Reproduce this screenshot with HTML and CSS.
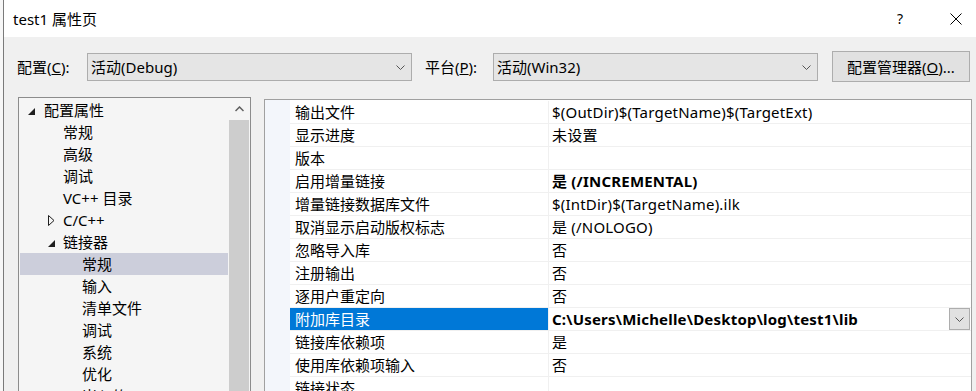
FILE: index.html
```html
<!DOCTYPE html>
<html lang="zh-CN">
<head>
  <meta charset="UTF-8" />
  <title>test1 属性页</title>
  <link rel="stylesheet" href="styles.css">
</head>
<body>
  <div class="dialog">
    <div class="titlebar">
      <span class="title">test1 属性页</span>
      <span class="help">?</span>
      <svg class="close" width="12" height="12" viewBox="0 0 12 12">
        <path d="M0.5 0.5 L11.5 11.5 M11.5 0.5 L0.5 11.5" stroke="#000" stroke-width="1" fill="none"/>
      </svg>
    </div>

    <div class="content">
      <div class="config-row">
        <label class="field-label">配置(<u>C</u>):</label>
        <div class="combo">
          <span>活动(Debug)</span>
          <svg class="chevron" width="9" height="5" viewBox="0 0 9 5"><path d="M0.5 0.5 L4.5 4.5 L8.5 0.5" stroke="#555" fill="none"/></svg>
        </div>
        <label class="field-label platform-label">平台(<u>P</u>):</label>
        <div class="combo">
          <span>活动(Win32)</span>
          <svg class="chevron" width="9" height="5" viewBox="0 0 9 5"><path d="M0.5 0.5 L4.5 4.5 L8.5 0.5" stroke="#555" fill="none"/></svg>
        </div>
        <button class="manager-btn">配置管理器(<u>O</u>)...</button>
      </div>

      <div class="main">
        <div class="tree">
          <ul class="tree-items">
            <li class="node lvl0"><span class="twisty"><span class="open"></span></span>配置属性</li>
            <li class="node lvl1">常规</li>
            <li class="node lvl1">高级</li>
            <li class="node lvl1">调试</li>
            <li class="node lvl1">VC++ 目录</li>
            <li class="node lvl1 parent"><span class="twisty"><svg width="7" height="11" viewBox="0 0 7 11"><path d="M0.5 0.5 L6 5.5 L0.5 10.5 Z" stroke="#1e1e1e" fill="none"/></svg></span>C/C++</li>
            <li class="node lvl1 parent"><span class="twisty"><span class="open"></span></span>链接器</li>
            <li class="node lvl2 selected">常规</li>
            <li class="node lvl2">输入</li>
            <li class="node lvl2">清单文件</li>
            <li class="node lvl2">调试</li>
            <li class="node lvl2">系统</li>
            <li class="node lvl2">优化</li>
            <li class="node lvl2">嵌入的 IDL</li>
          </ul>
          <div class="scrollbar">
            <div class="scroll-up">
              <svg width="9" height="6" viewBox="0 0 9 6"><path d="M0.5 5 L4.5 1 L8.5 5" stroke="#606060" stroke-width="1.5" fill="none"/></svg>
            </div>
            <div class="thumb"></div>
          </div>
        </div>

        <div class="grid">
          <div class="gutter"></div>
          <div class="rows">
            <div class="row"><div class="name">输出文件</div><div class="value">$(OutDir)$(TargetName)$(TargetExt)</div></div>
            <div class="row"><div class="name">显示进度</div><div class="value">未设置</div></div>
            <div class="row"><div class="name">版本</div><div class="value"></div></div>
            <div class="row"><div class="name">启用增量链接</div><div class="value bold">是 (/INCREMENTAL)</div></div>
            <div class="row"><div class="name">增量链接数据库文件</div><div class="value">$(IntDir)$(TargetName).ilk</div></div>
            <div class="row"><div class="name">取消显示启动版权标志</div><div class="value">是 (/NOLOGO)</div></div>
            <div class="row"><div class="name">忽略导入库</div><div class="value">否</div></div>
            <div class="row"><div class="name">注册输出</div><div class="value">否</div></div>
            <div class="row"><div class="name">逐用户重定向</div><div class="value">否</div></div>
            <div class="row selected">
              <div class="name">附加库目录</div>
              <div class="value bold">
                <span>C:\Users\Michelle\Desktop\log\test1\lib</span>
                <span class="drop-btn"><svg width="9" height="5" viewBox="0 0 9 5"><path d="M0.5 0.5 L4.5 4.5 L8.5 0.5" stroke="#555" fill="none"/></svg></span>
              </div>
            </div>
            <div class="row"><div class="name">链接库依赖项</div><div class="value">是</div></div>
            <div class="row"><div class="name">使用库依赖项输入</div><div class="value">否</div></div>
            <div class="row"><div class="name">链接状态</div><div class="value"></div></div>
          </div>
        </div>
      </div>
    </div>
  </div>
</body>
</html>
```

FILE: styles.css
```css
html, body {
  margin: 0;
  height: 100%;
  overflow: hidden;
}
body {
  background: #f7f7f7;
  padding-left: 3px;
  font-family: "Noto Sans", "Noto Sans CJK SC", sans-serif;
  font-size: 15px;
  color: #000;
}
.dialog {
  border-left: 1px solid #7a7a7a;
  height: 100%;
  background: #f0f0f0;
}
.titlebar {
  height: 37px;
  background: #fff;
  display: flex;
  align-items: center;
  padding-left: 9px;
}
.title {
  flex: 1;
  line-height: 20px;
}
.help {
  font-size: 14px;
  line-height: 16px;
}
.close {
  margin-left: 47px;
  margin-right: 14px;
}
.content {
  padding: 14px 4px 0 14px;
}
.config-row {
  display: flex;
  align-items: flex-start;
  height: 31px;
}
.field-label {
  width: 70px;
  box-sizing: border-box;
  margin-left: -1px;
  margin-top: 2px;
  line-height: 28px;
}
.platform-label {
  width: 81px;
  margin-left: 0;
  padding-left: 13px;
}
.combo {
  width: 325px;
  height: 28px;
  box-sizing: border-box;
  margin-top: 2px;
  background: #e5e5e5;
  border: 1px solid #adadad;
  display: flex;
  align-items: center;
  padding: 0 6px 0 3px;
  line-height: 26px;
}
.combo span {
  flex: 1;
}
.manager-btn {
  margin-left: 14px;
  width: 138px;
  height: 31px;
  background: #e1e1e1;
  border: 1px solid #adadad;
  font-family: inherit;
  font-size: 15px;
  color: #000;
  padding: 0;
}
.main {
  display: flex;
  align-items: flex-start;
  margin-top: 15px;
}
.tree {
  width: 233px;
  height: 320px;
  box-sizing: border-box;
  border: 1px solid #8c8c8c;
  background: #f5f5f5;
  display: flex;
}
.tree-items {
  list-style: none;
  margin: 0;
  padding: 1px;
  width: 208px;
}
.node {
  height: 22px;
  line-height: 22px;
  display: flex;
  align-items: center;
  white-space: nowrap;
}
.node.lvl0 { padding-left: 8px; }
.node.lvl1 { padding-left: 43px; }
.node.lvl1.parent { padding-left: 28px; }
.node.lvl2 { padding-left: 62px; }
.node.selected {
  background: #cccedb;
}
.twisty {
  display: inline-flex;
  align-items: center;
  width: 16px;
  height: 22px;
}
.parent .twisty {
  width: 15px;
}
.open {
  width: 0;
  height: 0;
  border-left: 7px solid transparent;
  border-bottom: 7px solid #1e1e1e;
  margin-top: 2px;
}
.scrollbar {
  width: 20px;
  margin-right: 1px;
  display: flex;
  flex-direction: column;
}
.scroll-up {
  height: 22px;
  display: flex;
  align-items: center;
  justify-content: center;
}
.thumb {
  flex: 1;
  background: #cdcdcd;
}
.grid {
  margin-left: 13px;
  margin-top: 2px;
  width: 708px;
  height: 320px;
  box-sizing: border-box;
  border: 1px solid #a0a0a0;
  display: flex;
  background: #fff;
}
.gutter {
  width: 25px;
  background: #f3f6fb;
}
.rows {
  flex: 1;
  padding-top: 1px;
}
.row {
  display: flex;
  height: 23px;
  box-sizing: border-box;
  border-bottom: 1px solid #f0f0f0;
  line-height: 22px;
}
.name {
  width: 259px;
  box-sizing: border-box;
  border-right: 1px solid #f0f0f0;
  padding-left: 5px;
  white-space: nowrap;
}
.value {
  flex: 1;
  padding-left: 3px;
  white-space: nowrap;
  display: flex;
  letter-spacing: 0.2px;
}
.value span:first-child {
  flex: 1;
}
.bold {
  font-weight: bold;
}
.row.selected .name {
  background: #0078d7;
  color: #fff;
}
.drop-btn {
  width: 21px;
  height: 22px;
  box-sizing: border-box;
  margin-right: 1px;
  background: #e1e1e1;
  border: 1px solid #adadad;
  display: flex;
  align-items: center;
  justify-content: center;
}
```
